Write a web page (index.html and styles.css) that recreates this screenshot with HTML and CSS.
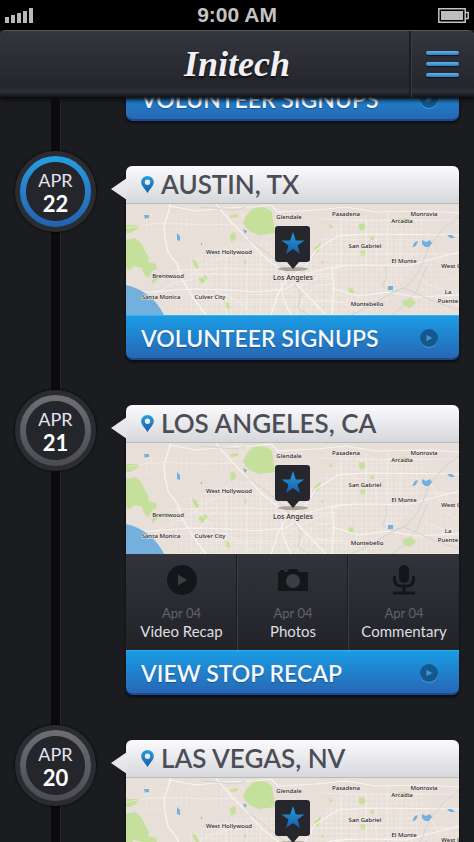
FILE: index.html
```html
<!doctype html>
<html lang="en">
  <head>
    <meta charset="utf-8" />
    <meta name="viewport" content="width=device-width" />
    <title>Initech</title>
    <link rel="stylesheet" href="styles.css">
  </head>
  <body>
    <!-- Shared artwork -->
    <svg class="defs" aria-hidden="true">
      <defs>
        <linearGradient id="blue" x1="0" y1="0" x2="0" y2="1">
          <stop offset="0" stop-color="#22a0de" />
          <stop offset="1" stop-color="#1c5aa8" />
        </linearGradient>
        <pattern id="streets" width="5" height="5" patternUnits="userSpaceOnUse">
          <path d="M0 .5H5M.5 0V5" stroke="#f3ece7" stroke-width=".5" />
        </pattern>
        <symbol id="pin" viewBox="0 0 13 17">
          <path fill="url(#blue)" fill-rule="evenodd" d="M6.500 0A6.300 6.300 0 0 1 12.800 6.300C12.800 10 8.500 13.500 6.500 17C4.500 13.500 .2 10 .2 6.300A6.300 6.300 0 0 1 6.500 0ZM6.500 3.500A2.700 2.700 0 1 0 6.500 8.900A2.700 2.700 0 1 0 6.500 3.500Z" />
        </symbol>
        <symbol id="go" viewBox="0 0 20 20">
          <circle cx="10" cy="11" r="9" fill="#4a97da" />
          <circle cx="10" cy="10" r="9" fill="#14588f" />
          <path d="M7.500 6.800 13.200 10 7.500 13.200Z" fill="#4294cf" />
        </symbol>
        <symbol id="map" viewBox="0 0 333 111">
          <rect width="333" height="111" fill="#e8dfd8" />
          <path fill="url(#streets)" d="M62 55 100 42 140 36 180 50 215 15H300L290 60 250 111H62Z" />
          <path fill="url(#streets)" d="M15 8H130V30H60L20 34ZM290 55 333 40V111H280ZM42 70 62 60V111H50Z" opacity=".5" />
          <g fill="#c5e09b">
            <path d="M117 19 121 10 128 4Q138 1 146 8L149 29 133 31 123 27Z" />
            <path d="M0 21H14L10 26 4 29H0Z" />
            <path d="M0 36 9 34 15 39 19 47 23 54 22 58 30 60 31 65 26 67 22 74 18 70 16 64 8 62 4 66 0 64Z" />
            <path d="M25 77 32 71 38 69 32 75 27 80Z" />
            <path d="M66 55 70 57 73 63 72 66 68 62Z" />
            <path d="M72 75 80 71 82 75 76 80Z" />
            <path d="M104 30 109 28 110 35 105 38Z" />
            <path d="M104 11 112 10 112 13 105 14Z" />
            <path d="M98 96 103 99 104 105 100 104Z" />
            <path d="M233 20 238 19 240 24 236 27 233 25Z" />
            <path d="M234 47 239 46 240 51 235 52Z" />
            <path d="M188 44 195 38 194 45 190 49Z" />
            <path d="M195 57 198 58 196 61Z" />
            <path d="M222 85 227 84 228 89 223 89Z" />
            <path d="M244 33 247 32 248 36 245 36Z" />
            <path d="M276 97 285 94 290 99 284 104 278 102Z" />
            <path d="M270 15 280 14 279 17 271 17ZM118 57 121 55 120 62ZM203 20 207 23 204 25ZM8 99 12 98 11 103Z" />
          </g>
          <g fill="none" stroke="#f8f4f1" stroke-linejoin="round">
            <path stroke-width="1.300" d="M44 0 43 7 38 21 39 34 42 48 51 60 56 75 66 92 80 111" />
            <path stroke-width="1.200" d="M44 2 70 7 100 4 128 3 145 1 152 8 190 6 220 3 250 8 300 7 333 9" />
            <path stroke-width="1.200" d="M90 0 105 18 122 35 135 50 150 62 168 78 180 90 200 111" />
            <path stroke-width="1.100" d="M0 88 25 88 50 86 70 85 100 86 130 88 160 85 180 70 210 62 240 61 280 62 333 48" />
            <path stroke-width="1.200" d="M145 111 152 90 160 76 178 64 190 46 212 32 240 30 333 31" />
            <path stroke-width="1.200" d="M155 78 158 96 165 111M206 111 208 82 206 65 220 61M206 84 232 92 262 88 290 93 333 91" />
            <path stroke-width=".5" d="M0 24 24 20 42 19 80 21 110 20M60 75 80 59 100 52 122 50M100 44V111M121 44V111M134 50V111M62 70H210M82 98H240M45 67 100 64 150 66M215 10V60M240 10V61M262 8V90M194 15 250 17 333 16M190 50H333M160 90 195 72 206 74M110 0 118 12M70 66 90 87 110 96 130 111" />
            <path stroke-width=".5" d="M74 85 82 74 92 67M28 90 50 78 66 76M285 63 300 80 315 85 333 103M300 31 312 55 320 70 333 76M274 30V62M250 32V58M228 30V60M170 111 178 94 190 82 206 80M180 111 190 96 215 98 240 111" />
          </g>
          <g fill="none" stroke="#ccd3cf" stroke-width=".9">
            <path d="M333 13 318 24 303 42 297 58 291 70 281 82 262 91 240 104 225 111" />
            <path d="M266 111 276 103 290 88 301 62M260 62 261 73 256 82 265 88 278 84 310 98 333 106" />
            <path d="M122 35 140 48 160 65 175 90 172 104 183 111M75 3 110 6 120 3" />
          </g>
          <g fill="#74b0de">
            <path d="M0 81Q26 87 38 111H0Z" />
            <path d="M18 11H23V14H21L19 15ZM51 29 54 32 54 37 51 36ZM117 25 121 27 119 30ZM75 39H76V41H75Z" />
            <path d="M296 36 300 38 304 36 306 39 303 43 299 43 296 40ZM286 43 289 38 292 37 290 42ZM321 31 326 31 329 34 324 34ZM262 82H267V86H262Z" />
          </g>
          <ellipse cx="167" cy="65" rx="15" ry="2" fill="#77706a" opacity=".55" />
          <path fill="#26272c" d="M152 22H181Q184 22 184 25V55Q184 58 181 58H173L167 65 161 58H152Q149 58 149 55V25Q149 22 152 22Z" />
          <path fill="url(#blue)" d="M167 28 169.800 36.400 178.400 36.400 171.500 41.600 174 50 167 45 160 50 162.500 41.600 155.600 36.400 164.200 36.400Z" />
        </symbol>
      </defs>
    </svg>

    <div class="status">
      <svg class="signal" viewBox="0 0 28 15" role="img" aria-label="Signal">
        <path fill="#b9b9b9" d="M0 9H4V15H0ZM6 7H10V15H6ZM12 5H16V15H12ZM18 3H22V15H18ZM24 0H28V15H24Z" />
      </svg>
      <time>9:00 AM</time>
      <svg class="battery" viewBox="0 0 31 15" role="img" aria-label="Battery">
        <path fill="none" stroke="#c4c4c4" stroke-width="1.500" d="M.8 .8H27.200V4.500H30.200V10.500H27.200V14.200H.8ZM27.200 4.500V10.500" />
        <path fill="#bdbdbd" d="M3 3H25V12H3Z" />
      </svg>
    </div>

    <header class="navbar">
      <h1>Initech</h1>
      <button class="menu" type="button" aria-label="Menu">
        <span></span>
        <span></span>
        <span></span>
      </button>
    </header>

    <main>
      <ol class="timeline">
        <li class="stop">
          <article class="card">
            <a class="action" href="#signups">VOLUNTEER SIGNUPS <svg><use href="#go" /></svg></a>
          </article>
        </li>

        <li class="stop">
          <time class="date date-next" datetime="04-22">APR <b>22</b></time>
          <article class="card">
            <h2><svg><use href="#pin" /></svg>AUSTIN, TX</h2>
            <svg class="map" viewBox="0 0 333 111" preserveAspectRatio="xMidYMid slice">
              <use href="#map" />
              <text x="163" y="15">Glendale</text>
              <text x="220" y="12">Pasadena</text>
              <text x="298" y="12">Monrovia</text>
              <text x="276" y="19">Arcadia</text>
              <text x="103" y="50">West Hollywood</text>
              <text x="239" y="44">San Gabriel</text>
              <text x="278" y="59">El Monte</text>
              <text x="325" y="64">West C</text>
              <text x="42" y="74">Brentwood</text>
              <text x="35" y="95">Santa Monica</text>
              <text x="84" y="95">Culver City</text>
              <text x="241" y="102">Montebello</text>
              <text x="322" y="90">La</text>
              <text x="322" y="99">Puente</text>
              <text class="city" x="167" y="76">Los Angeles</text>
            </svg>
            <a class="action" href="#signups">VOLUNTEER SIGNUPS <svg><use href="#go" /></svg></a>
          </article>
        </li>

        <li class="stop">
          <time class="date" datetime="04-21">APR <b>21</b></time>
          <article class="card">
            <h2><svg><use href="#pin" /></svg>LOS ANGELES, CA</h2>
            <svg class="map" viewBox="0 0 333 111" preserveAspectRatio="xMidYMid slice">
              <use href="#map" />
              <text x="163" y="15">Glendale</text>
              <text x="220" y="12">Pasadena</text>
              <text x="298" y="12">Monrovia</text>
              <text x="276" y="19">Arcadia</text>
              <text x="103" y="50">West Hollywood</text>
              <text x="239" y="44">San Gabriel</text>
              <text x="278" y="59">El Monte</text>
              <text x="325" y="64">West C</text>
              <text x="42" y="74">Brentwood</text>
              <text x="35" y="95">Santa Monica</text>
              <text x="84" y="95">Culver City</text>
              <text x="241" y="102">Montebello</text>
              <text x="322" y="90">La</text>
              <text x="322" y="99">Puente</text>
              <text class="city" x="167" y="76">Los Angeles</text>
            </svg>
            <ul class="recap">
              <li>
                <a href="#video">
                  <svg viewBox="0 0 32 32">
                    <circle cx="16" cy="16" r="15" fill="#15161a" />
                    <path d="M12 10.500 21 16 12 21.500Z" fill="#3c3d44" />
                  </svg>
                  <small>Apr 04</small>
                  Video Recap
                </a>
              </li>
              <li>
                <a href="#photos">
                  <svg viewBox="0 0 32 32">
                    <path fill="#15161a" d="M1 8H3V6H7V8H10L12 5H20L22 8H31V27H1Z" />
                    <circle cx="16" cy="17" r="7" fill="#3c3d44" />
                  </svg>
                  <small>Apr 04</small>
                  Photos
                </a>
              </li>
              <li>
                <a href="#commentary">
                  <svg viewBox="0 0 32 32">
                    <rect x="11" y="1" width="10" height="18" rx="5" fill="#15161a" />
                    <path fill="none" stroke="#15161a" stroke-width="3" d="M6.500 12V15Q6.500 22 13 22H19Q25.500 22 25.500 15V12M16 22V28M5 29H27" />
                  </svg>
                  <small>Apr 04</small>
                  Commentary
                </a>
              </li>
            </ul>
            <a class="action" href="#recap">VIEW STOP RECAP <svg><use href="#go" /></svg></a>
          </article>
        </li>

        <li class="stop">
          <time class="date" datetime="04-20">APR <b>20</b></time>
          <article class="card">
            <h2><svg><use href="#pin" /></svg>LAS VEGAS, NV</h2>
            <svg class="map" viewBox="0 0 333 111" preserveAspectRatio="xMidYMid slice">
              <use href="#map" />
              <text x="163" y="15">Glendale</text>
              <text x="220" y="12">Pasadena</text>
              <text x="298" y="12">Monrovia</text>
              <text x="276" y="19">Arcadia</text>
              <text x="103" y="50">West Hollywood</text>
              <text x="239" y="44">San Gabriel</text>
              <text x="278" y="59">El Monte</text>
              <text x="325" y="64">West C</text>
            </svg>
          </article>
        </li>
      </ol>
    </main>
  </body>
</html>
```

FILE: styles.css
```css
*, *::before, *::after {
  box-sizing: border-box;
}

html, body {
  margin: 0;
  padding: 0;
}

body {
  display: flex;
  flex-direction: column;
  height: 100vh;
  overflow: hidden;
  background: #1b1c20;
  color: #fff;
  font-family: Lato, "Open Sans", sans-serif;
}

h1, h2, ol, ul {
  margin: 0;
  padding: 0;
  list-style: none;
}

a {
  color: inherit;
  text-decoration: none;
}

.defs {
  position: absolute;
  width: 0;
  height: 0;
}

/* Status bar */
.status {
  display: grid;
  grid-template-columns: 1fr auto 1fr;
  align-items: center;
  flex: none;
  height: 30px;
  padding: 0 5px;
  background: #000;
  color: #c4c4c4;
  font: bold 21px/30px "Liberation Sans", Arial, sans-serif;
}

.signal {
  width: 28px;
  height: 15px;
}

.battery {
  justify-self: end;
  width: 31px;
  height: 15px;
}

/* Nav bar */
.navbar {
  display: grid;
  grid-template-columns: 65px 1fr 65px;
  flex: none;
  z-index: 1;
  height: 67px;
  border-top: 1px solid #55565c;
  border-radius: 6px 6px 0 0;
  background: linear-gradient(#34363d, #25262c 56px, #2f3036 60px, #1d1e22 64px, #131417);
  box-shadow: 0 3px 4px #0b0b0d;
}

.navbar h1 {
  grid-column: 2;
  color: #f1f1f5;
  font: italic bold 36px/66px "Liberation Serif", serif;
  text-align: center;
  text-shadow: 0 2px 2px #111;
}

.menu {
  display: flex;
  flex-direction: column;
  justify-content: center;
  gap: 7px;
  padding: 0 15px;
  border: 0;
  border-left: 2px solid #1c1d21;
  background: none;
  box-shadow: inset 1px 0 #3b3c42;
}

.menu span {
  height: 4px;
  border-radius: 2px;
  background: linear-gradient(#62b4ea, #2c7ec6);
  box-shadow: 0 1px 1px #111;
}

/* Timeline */
main {
  flex: 1;
  min-height: 0;
  overflow: hidden;
  background: linear-gradient(90deg, transparent 51px, #0c0c0e 51px 60px, #26272c 60px 61px, transparent 61px);
}

.timeline {
  display: flex;
  flex-direction: column;
  gap: 45px;
  margin-top: -21px;
  padding: 0 15px;
}

.stop {
  display: grid;
  grid-template-columns: 81px 1fr;
  column-gap: 30px;
  align-items: start;
}

.date {
  display: flex;
  flex-direction: column;
  align-items: center;
  justify-content: center;
  height: 81px;
  margin-top: -15px;
  border: 5px solid #2b2c31;
  border-radius: 50%;
  background:
    radial-gradient(circle closest-side, #25262c 29px, transparent 30px),
    linear-gradient(#6e6f75, #4b4c52);
  box-shadow: 0 0 3px #000;
  color: #e4e4f0;
  font-size: 18px;
  line-height: 23px;
}

.date b {
  color: #fff;
  font-size: 22px;
}

.date-next {
  background:
    radial-gradient(circle closest-side, #25262c 29px, transparent 30px),
    linear-gradient(#259fe2, #2560ae);
}

.card {
  position: relative;
  grid-column: 2;
  border-radius: 6px;
  box-shadow: 0 2px 3px #0a0b0e;
}

.card h2 {
  display: flex;
  align-items: center;
  gap: 7px;
  height: 38px;
  padding-left: 15px;
  border-bottom: 1px solid #b9babd;
  border-radius: 6px 6px 0 0;
  background: linear-gradient(#fbfbfc, #d6d7db);
  color: #4c4e57;
  font-size: 26px;
  font-weight: 600;
  line-height: 37px;
}

.card h2 svg {
  width: 13px;
  height: 17px;
}

/* Pointer towards the date */
.card h2::before {
  content: "";
  position: absolute;
  top: 12px;
  left: -15px;
  width: 16px;
  height: 22px;
  background: linear-gradient(#efeff1, #dfe0e3);
  clip-path: polygon(0 50%, 100% 0, 100% 100%);
}

.map {
  display: block;
  width: 100%;
  height: 111px;
}

.map text {
  fill: #26262a;
  stroke: #f3ede8;
  stroke-width: 1px;
  paint-order: stroke;
  font: 500 6px "Noto Sans", sans-serif;
  text-anchor: middle;
}

.map .city {
  font-size: 7px;
}

.recap {
  display: grid;
  grid-template-columns: repeat(3, 1fr);
  background: linear-gradient(#33343b, #222328);
}

.recap li + li {
  border-left: 1px solid #3d3e45;
  box-shadow: -1px 0 #1c1d21;
}

.recap a {
  display: flex;
  flex-direction: column;
  align-items: center;
  height: 96px;
  padding-top: 10px;
  color: #dedee2;
  font-size: 15px;
  line-height: 18px;
}

.recap svg {
  width: 32px;
  height: 32px;
  margin-bottom: 8px;
}

.recap small {
  color: #62636b;
  font-size: 13px;
}

.action {
  display: flex;
  align-items: center;
  justify-content: space-between;
  height: 45px;
  padding: 2px 20px 0 15px;
  border-top: 1px solid #35b0ee;
  border-bottom: 2px solid #1a4a90;
  border-radius: 0 0 7px 7px;
  background: linear-gradient(#1a9ce4, #2767b4);
  color: #f4f8fc;
  font-size: 23px;
  font-weight: 600;
  text-shadow: 0 1px 1px #1a5391;
}

.action svg {
  width: 20px;
  height: 20px;
}
```
